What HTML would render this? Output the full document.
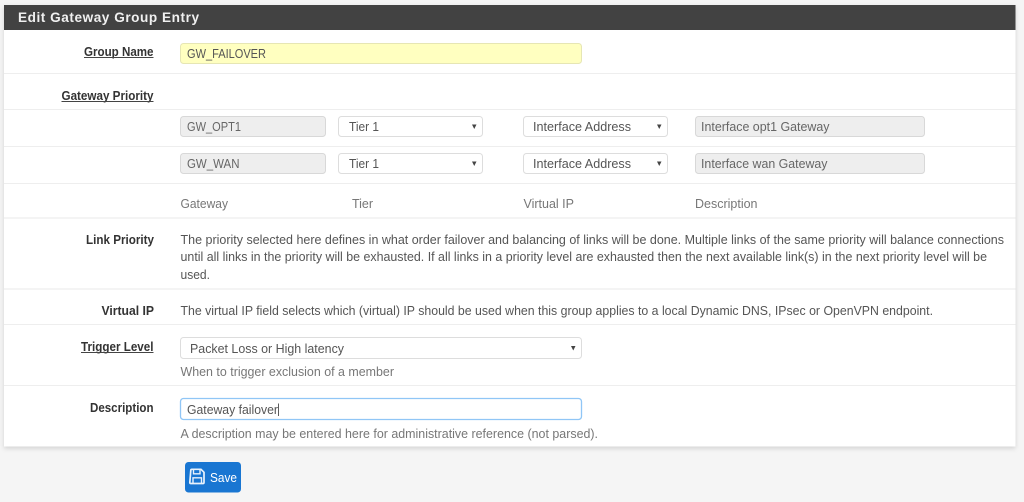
<!DOCTYPE html>
<html><head><meta charset="utf-8"><title>Edit Gateway Group Entry</title>
<style>
html,body{margin:0;padding:0;width:1024px;height:502px;overflow:hidden;background:#f5f5f5}
svg{display:block;filter:blur(.3px)}
text{font-family:"Liberation Sans",sans-serif;font-size:13px;fill:#555}
.l{font-weight:bold;fill:#333;font-size:12.5px}
.h{fill:#777}
.b{fill:#fff;stroke:#ddd}
.g{fill:#eee;stroke:#d8d8d8}
</style></head><body>
<svg width="1024" height="502" viewBox="0 0 1024 502" xmlns="http://www.w3.org/2000/svg">
<defs><filter id="s" x="-2%" y="-2%" width="104%" height="106%"><feDropShadow dx="0" dy="2" stdDeviation="2.5" flood-color="#000" flood-opacity=".14"/></filter></defs>
<rect x="4" y="5" width="1011.500" height="441.500" fill="#fff" filter="url(#s)"/>
<rect x="4" y="5" width="1011.500" height="25" fill="#424242"/>
<text x="18" y="22" textLength="181" style="font-size:13.6px;font-weight:bold;fill:#f0f0f0">Edit Gateway Group Entry</text>

<path d="M4 73.500H1015.500M4 109.500H1015.500M4 146.500H1015.500M4 183.500H1015.500M4 324.500H1015.500M4 385.500H1015.500" stroke="#eee" stroke-width="1"/>
<path d="M4 218H1015.500M4 289H1015.500" stroke="#f0f0f0" stroke-width="1.500"/>

<text class="l" x="84" y="56" textLength="69.500" lengthAdjust="spacingAndGlyphs">Group Name</text>
<path d="M84 57.500H153.500" stroke="#444"/>
<rect x="180.500" y="43.500" width="401" height="20" rx="3" fill="#ffffc0" stroke="#e6e6b4"/>
<text x="187" y="58" textLength="79" lengthAdjust="spacingAndGlyphs">GW_FAILOVER</text>

<text class="l" x="61.500" y="100" textLength="92" lengthAdjust="spacingAndGlyphs">Gateway Priority</text>
<path d="M61.500 101.500H153.500" stroke="#444"/>

<rect class="g" x="180.500" y="116.500" width="145" height="20" rx="3"/>
<text x="187" y="131" textLength="54" lengthAdjust="spacingAndGlyphs" style="fill:#666">GW_OPT1</text>
<rect class="b" x="338.500" y="116.500" width="144" height="20" rx="3"/>
<text x="349" y="131" textLength="30" lengthAdjust="spacingAndGlyphs">Tier 1</text>
<path d="M472 124.500h4.500l-2.250 4.500z" fill="#444"/>
<rect class="b" x="523.500" y="116.500" width="144" height="20" rx="3"/>
<text x="533" y="131" textLength="98" lengthAdjust="spacingAndGlyphs">Interface Address</text>
<path d="M657 124.500h4.500l-2.250 4.500z" fill="#444"/>
<rect class="g" x="695.500" y="116.500" width="229" height="20" rx="3"/>
<text x="701" y="131" textLength="128.500" lengthAdjust="spacingAndGlyphs" style="fill:#666">Interface opt1 Gateway</text>

<rect class="g" x="180.500" y="153.500" width="145" height="20" rx="3"/>
<text x="187" y="168" textLength="52.500" lengthAdjust="spacingAndGlyphs" style="fill:#666">GW_WAN</text>
<rect class="b" x="338.500" y="153.500" width="144" height="20" rx="3"/>
<text x="349" y="168" textLength="30" lengthAdjust="spacingAndGlyphs">Tier 1</text>
<path d="M472 161.500h4.500l-2.250 4.500z" fill="#444"/>
<rect class="b" x="523.500" y="153.500" width="144" height="20" rx="3"/>
<text x="533" y="168" textLength="98" lengthAdjust="spacingAndGlyphs">Interface Address</text>
<path d="M657 161.500h4.500l-2.250 4.500z" fill="#444"/>
<rect class="g" x="695.500" y="153.500" width="229" height="20" rx="3"/>
<text x="701" y="168" textLength="126.500" lengthAdjust="spacingAndGlyphs" style="fill:#666">Interface wan Gateway</text>

<text class="h" x="180.500" y="208" textLength="47.500" lengthAdjust="spacingAndGlyphs">Gateway</text>
<text class="h" x="352" y="208" textLength="21" lengthAdjust="spacingAndGlyphs">Tier</text>
<text class="h" x="523.500" y="208" textLength="50.500" lengthAdjust="spacingAndGlyphs">Virtual IP</text>
<text class="h" x="695" y="208" textLength="62.500" lengthAdjust="spacingAndGlyphs">Description</text>

<text class="l" x="86" y="244" textLength="68" lengthAdjust="spacingAndGlyphs">Link Priority</text>
<text x="180.500" y="244" textLength="823.500" lengthAdjust="spacingAndGlyphs">The priority selected here defines in what order failover and balancing of links will be done. Multiple links of the same priority will balance connections</text>
<text x="180.500" y="261" textLength="806.500" lengthAdjust="spacingAndGlyphs">until all links in the priority will be exhausted. If all links in a priority level are exhausted then the next available link(s) in the next priority level will be</text>
<text x="180.500" y="279" textLength="29.500" lengthAdjust="spacingAndGlyphs">used.</text>

<text class="l" x="101.500" y="315" textLength="52.500" lengthAdjust="spacingAndGlyphs">Virtual IP</text>
<text x="180.500" y="315" textLength="752.500" lengthAdjust="spacingAndGlyphs">The virtual IP field selects which (virtual) IP should be used when this group applies to a local Dynamic DNS, IPsec or OpenVPN endpoint.</text>

<text class="l" x="81" y="351" textLength="72.500" lengthAdjust="spacingAndGlyphs">Trigger Level</text>
<path d="M81 352.500H153.500" stroke="#444"/>
<rect class="b" x="180.500" y="337.500" width="401" height="21" rx="3"/>
<text x="190" y="353" textLength="154" lengthAdjust="spacingAndGlyphs">Packet Loss or High latency</text>
<path d="M571 346h4.500l-2.250 4.500z" fill="#444"/>
<text class="h" x="180.500" y="376" textLength="213.500" lengthAdjust="spacingAndGlyphs">When to trigger exclusion of a member</text>

<text class="l" x="90" y="412" textLength="63.500" lengthAdjust="spacingAndGlyphs">Description</text>
<rect x="180.500" y="398.500" width="401" height="21" rx="3" fill="#fff" stroke="#90c6f6" stroke-width="1.300"/>
<text x="187" y="414" textLength="91" lengthAdjust="spacingAndGlyphs">Gateway failover</text>
<path d="M278.500 403.500V416" stroke="#333" stroke-width=".8"/>
<text class="h" x="180.500" y="438" textLength="417.500" lengthAdjust="spacingAndGlyphs">A description may be entered here for administrative reference (not parsed).</text>

<rect x="185" y="462" width="56" height="30.500" rx="3.500" fill="#1976d2"/>
<path d="M190.800 470.300a1 1 0 0 1 1-1h9.200l3 3v10.200a1 1 0 0 1-1 1h-12.200a1 1 0 0 1-1-1z" fill="none" stroke="#e8f2fc" stroke-width="1.700"/>
<path d="M193.500 470v3.800h6.500V470M193 483v-5.200h8.500v5.200" fill="none" stroke="#e8f2fc" stroke-width="1.400"/>
<text x="210" y="482" textLength="27" lengthAdjust="spacingAndGlyphs" style="fill:#fff;font-size:12.5px">Save</text>
</svg>
</body></html>
